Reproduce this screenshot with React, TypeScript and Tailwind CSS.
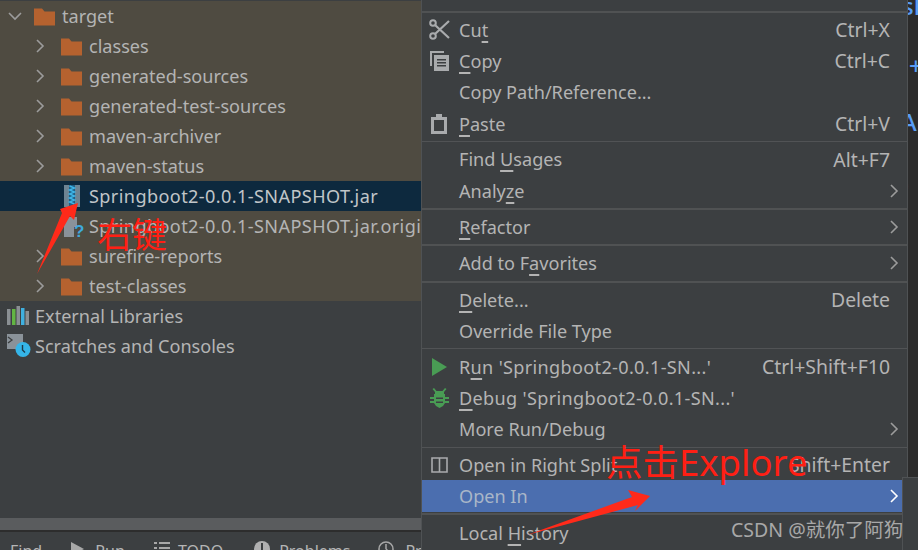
import React from 'react';

const FONT = "[font-family:'Noto_Sans','Noto_Sans_CJK_SC',sans-serif]";

const Folder = () => (
  <svg width="21" height="19" viewBox="0 0 21 19" className="shrink-0">
    <path d="M0 1.5h8l2.5 3H21v14H0z" fill="#b5622f" />
  </svg>
);

const Chevron = ({ open = false, color = '#9c9c9c' }: { open?: boolean; color?: string }) => (
  <svg width="14" height="14" viewBox="0 0 14 14" className="shrink-0">
    <path d={open ? 'M1 4l6 6 6-6' : 'M4 1l6 6-6 6'} fill="none" stroke={color} strokeWidth="1.6" />
  </svg>
);

const JarIcon = () => (
  <svg width="16" height="22" viewBox="0 0 16 22" className="shrink-0">
    <rect x="0" y="0" width="16" height="22" fill="#6e8493" />
    <rect x="5" y="0" width="6" height="22" fill="#1e5f85" />
    <path d="M5.5 1l5 2-5 2 5 2-5 2 5 2-5 2 5 2-5 2 5 2" fill="none" stroke="#3fb6e8" strokeWidth="1.4" />
  </svg>
);

const OrigIcon = () => (
  <svg width="21" height="24" viewBox="0 0 21 24" className="shrink-0">
    <path d="M0 22V3h13v10H8v9z" fill="#8a9299" />
    <rect x="0" y="11" width="10" height="12" fill="#8a9299" />
    <text x="10" y="23" fontSize="17" fontWeight="700" fill="#3fa9dc" fontFamily="Liberation Sans">?</text>
  </svg>
);

const LibIcon = () => (
  <svg width="22" height="20" viewBox="0 0 22 20" className="shrink-0">
    <rect x="0" y="3" width="3.5" height="16" fill="#8a8f93" />
    <rect x="5" y="3" width="3.5" height="16" fill="#62b543" />
    <rect x="9.5" y="0" width="3.5" height="19" fill="#8a8f93" />
    <rect x="14" y="2" width="3.5" height="17" fill="#3fb0e0" />
    <rect x="18.5" y="5" width="3.5" height="14" fill="#8a8f93" />
  </svg>
);

const ScratchIcon = () => (
  <svg width="24" height="24" viewBox="0 0 24 24" className="shrink-0">
    <rect x="0" y="0" width="16" height="15" fill="#8a9299" />
    <path d="M1 3l4 3-4 3" fill="none" stroke="#3c3f41" strokeWidth="1.3" />
    <circle cx="16" cy="15.5" r="7.5" fill="#35b5e8" />
    <path d="M15.5 11v5l2.5 2.5" fill="none" stroke="#1d3a4a" strokeWidth="1.4" />
  </svg>
);

const treeRows = ['classes', 'generated-sources', 'generated-test-sources', 'maven-archiver', 'maven-status'];

const TreeRow = ({ name }: { name: string }) => (
  <div className="h-[30px] flex items-center bg-[#4f4b41] pl-[33px] whitespace-nowrap overflow-hidden">
    <Chevron />
    <div className="w-[14px]" />
    <Folder />
    <span className="ml-[7px]">{name}</span>
  </div>
);

const Tree = () => (
  <div className="pt-px">
    <div className="h-[30px] flex items-center bg-[#4f4b41] pl-[8px]">
      <Chevron open />
      <div className="w-[12px]" />
      <Folder />
      <span className="ml-[7px]">target</span>
    </div>
    {treeRows.map((r) => (
      <TreeRow key={r} name={r} />
    ))}
    <div className="h-[30px] flex items-center bg-[#0d293e] pl-[64px] whitespace-nowrap text-[#c0c5c8]">
      <JarIcon />
      <span className="ml-[9px] tracking-[0.4px]">Springboot2-0.0.1-SNAPSHOT.jar</span>
    </div>
    <div className="h-[30px] flex items-center bg-[#4f4b41] pl-[64px] whitespace-nowrap overflow-hidden">
      <OrigIcon />
      <span className="ml-[4px] tracking-[0.4px]">Springboot2-0.0.1-SNAPSHOT.jar.original</span>
    </div>
    <TreeRow name="surefire-reports" />
    <TreeRow name="test-classes" />
    <div className="h-[30px] flex items-center pl-[7px]">
      <LibIcon />
      <span className="ml-[6px]">External Libraries</span>
    </div>
    <div className="h-[30px] flex items-center pl-[7px]">
      <ScratchIcon />
      <span className="ml-[4px]">Scratches and Consoles</span>
    </div>
  </div>
);

const BottomBar = () => (
  <div className="h-[18px] overflow-hidden flex text-[16px] text-[#b5b5b5] pt-[9px] leading-[20px] pl-[10px]">
    <span>Find</span>
    <svg width="13" height="14" viewBox="0 0 13 14" className="ml-[29px] mt-[1px] shrink-0">
      <path d="M0 0l13 7-13 7z" fill="#a8a8a8" />
    </svg>
    <span className="ml-[11px]">Run</span>
    <svg width="16" height="14" viewBox="0 0 16 14" className="ml-[29px] mt-[1px] shrink-0">
      <path d="M0 0h3v2H0zM5 0h11v2H5zM0 5h3v2H0zM5 5h11v2H5z" fill="#a8a8a8" />
    </svg>
    <span className="ml-[8px]">TODO</span>
    <svg width="16" height="14" viewBox="0 0 16 14" className="ml-[31px] shrink-0">
      <circle cx="8" cy="8" r="8" fill="#b0b0b0" />
      <rect x="7" y="2" width="2" height="7" fill="#3c3f41" />
    </svg>
    <span className="ml-[9px]">Problems</span>
    <svg width="16" height="14" viewBox="0 0 16 14" className="ml-[28px] shrink-0">
      <circle cx="8" cy="8" r="7" fill="none" stroke="#a8a8a8" strokeWidth="1.5" />
      <path d="M8 8V3M8 8l4 4" stroke="#a8a8a8" strokeWidth="1.5" />
    </svg>
    <span className="ml-[11px]">Profiler</span>
  </div>
);

const Scissors = () => (
  <svg width="21" height="21" viewBox="0 0 21 21">
    <circle cx="4" cy="4" r="2.8" fill="none" stroke="#a9abad" strokeWidth="2" />
    <circle cx="4" cy="17" r="2.8" fill="none" stroke="#a9abad" strokeWidth="2" />
    <path d="M6 6l14 13M6 15L20 2" stroke="#a9abad" strokeWidth="2.2" />
  </svg>
);

const CopyIcon = () => (
  <svg width="19" height="20" viewBox="0 0 19 20">
    <path d="M0 0h14v2H2v13H0z" fill="#a9abad" />
    <path d="M4 4h15v16H4z" fill="#a9abad" />
    <path d="M7 8h9v1.4H7zM7 11h9v1.4H7zM7 14h9v1.4H7z" fill="#3c3f41" />
  </svg>
);

const PasteIcon = () => (
  <svg width="16" height="20" viewBox="0 0 16 20">
    <path d="M0 3h5V0h6v3h5v17H0z" fill="#a9abad" />
    <rect x="3" y="6" width="10" height="11" fill="#3c3f41" />
  </svg>
);

const RunIcon = () => (
  <svg width="15" height="18" viewBox="0 0 15 18">
    <path d="M0 0l15 9-15 9z" fill="#499c54" />
  </svg>
);

const BugIcon = () => (
  <svg width="19" height="20" viewBox="0 0 19 20">
    <path d="M4 0l2.5 3h6L15 0l1.5 1-2.5 3v2H5V4L2.5 1z" fill="#499c54" />
    <path d="M4 6h11v3h4v2h-4v2h4v2h-4l-2 3-3.500 2-3.500-2-2-3H0v-2h4v-2H0V9h4z" fill="#499c54" />
    <path d="M6 9.500h7v1.500H6zM6 13.500h7v1.500H6z" fill="#3c3f41" />
  </svg>
);

const SplitIcon = () => (
  <svg width="17" height="16" viewBox="0 0 17 16">
    <path d="M1 1h15v14H1zM8.500 1v14" fill="none" stroke="#a9abad" strokeWidth="1.6" />
  </svg>
);

const U = ({ children }: { children: React.ReactNode }) => (
  <span className="underline underline-offset-[4px] decoration-[1.5px] [text-decoration-skip-ink:none]">{children}</span>
);

type ItemProps = {
  icon?: React.ReactNode;
  label: React.ReactNode;
  shortcut?: string;
  sub?: boolean;
  selected?: boolean;
  wide?: boolean;
};

const Item = ({ icon, label, shortcut, sub, selected, wide }: ItemProps) => (
  <div className={`h-[31.4px] flex items-center whitespace-nowrap ${selected ? 'bg-[#4b6eaf] text-[#a9b6c8]' : ''}`}>
    <div className="w-[37px] flex justify-center shrink-0 pr-[3px]">{icon}</div>
    <div className={`flex-1 ${wide ? 'tracking-[0.33px]' : ''}`}>{label}</div>
    {shortcut && <div className="mr-[17px] text-[19.4px]">{shortcut}</div>}
    {sub && (
      <div className="mr-[6px]">
        <Chevron color={selected ? '#ffffff' : '#9c9c9c'} />
      </div>
    )}
  </div>
);

const Sep = ({ thick = false }: { thick?: boolean }) => (
  <div className={`my-[1.5px] ${thick ? 'h-[2px] bg-[#505253]' : 'h-px bg-[#515355]'}`} />
);

const Menu = () => (
  <div className="w-[487px] h-[550px] shrink-0 overflow-hidden bg-[#3c3f41] border-x border-[#4f5254] text-[#b4b4b4]">
    <div className="h-[9px]" />
    <Sep thick />
    <Item icon={<Scissors />} label={<>Cu<U>t</U></>} shortcut="Ctrl+X" />
    <Item icon={<CopyIcon />} label={<><U>C</U>opy</>} shortcut="Ctrl+C" />
    <Item label="Copy Path/Reference..." />
    <Item icon={<PasteIcon />} label={<><U>P</U>aste</>} shortcut="Ctrl+V" />
    <Sep />
    <Item label={<>Find <U>U</U>sages</>} shortcut="Alt+F7" />
    <Item label={<>Analy<U>z</U>e</>} sub />
    <Sep thick />
    <Item label={<><U>R</U>efactor</>} sub />
    <Sep thick />
    <Item label={<>Add to F<U>a</U>vorites</>} sub />
    <Sep thick />
    <Item label={<><U>D</U>elete...</>} shortcut="Delete" />
    <Item label="Override File Type" />
    <Sep />
    <Item wide icon={<RunIcon />} label={<>R<U>u</U>n 'Springboot2-0.0.1-SN...'</>} shortcut="Ctrl+Shift+F10" />
    <Item wide icon={<BugIcon />} label={<><U>D</U>ebug 'Springboot2-0.0.1-SN...'</>} />
    <Item label="More Run/Debug" sub />
    <Sep />
    <Item icon={<SplitIcon />} label="Open in Right Split" shortcut="Shift+Enter" />
    <Item label="Open In" sub selected />
    <Sep thick />
    <Item label={<>Local <U>H</U>istory</>} />
  </div>
);

const CodeStrip = () => (
  <div className="flex-1 h-[550px] overflow-hidden bg-[#2b2b2b] text-[#589df6] text-[24px] leading-[24px] font-medium whitespace-nowrap">
    <div className="-ml-[6px] -mt-[6px]">sh</div>
    <div className="ml-px mt-[36px]">+</div>
    <div className="-ml-[7px] mt-[32px]">Al</div>
    <div className="-ml-[7px] mt-[38px] text-[#b0a090]">)</div>
  </div>
);

export default function App() {
  return (
    <div className={`relative w-[918px] h-[550px] overflow-hidden flex bg-[#3c3f41] text-[18.1px] leading-none text-[#b4b4b4] ${FONT}`}>
      <div className="w-[421px] h-[550px] shrink-0 flex flex-col overflow-hidden">
        <Tree />
        <div className="flex-1" />
        <div className="h-[12px] bg-[#5a5c5e]" />
        <div className="h-[2px] bg-[#2d2d2d]" />
        <BottomBar />
      </div>
      <Menu />
      <CodeStrip />

      {/* submenu peeking out over the right edge */}
      <div className="absolute left-[902px] top-[477px] w-[16px] h-[73px] bg-[#3c3f41] border-l border-t border-[#4f5254]" />

      {/* red annotations */}
      <svg className="absolute inset-0 pointer-events-none" width="918" height="550" viewBox="0 0 918 550">
        <polygon points="37,274 62,213 60,209 78,203 74,220 70,216" fill="#ff2a1a" />
        <polygon points="527,535 632,497 628,490 650,496 635,511 638,505" fill="#ff2a1a" />
      </svg>
      <div className="absolute left-[97px] top-[215px] text-[35px] leading-[40px] text-[#ff1f14] whitespace-nowrap">右键</div>
      <div className="absolute left-[606px] top-[440px] text-[36.5px] leading-[44px] text-[#ff1f14] whitespace-nowrap">点击Explore</div>
      <div className="absolute left-[731px] top-[519px] text-[19.5px] leading-[22px] text-[#a8a8a8] whitespace-nowrap">CSDN @就你了阿狗</div>
    </div>
  );
}
